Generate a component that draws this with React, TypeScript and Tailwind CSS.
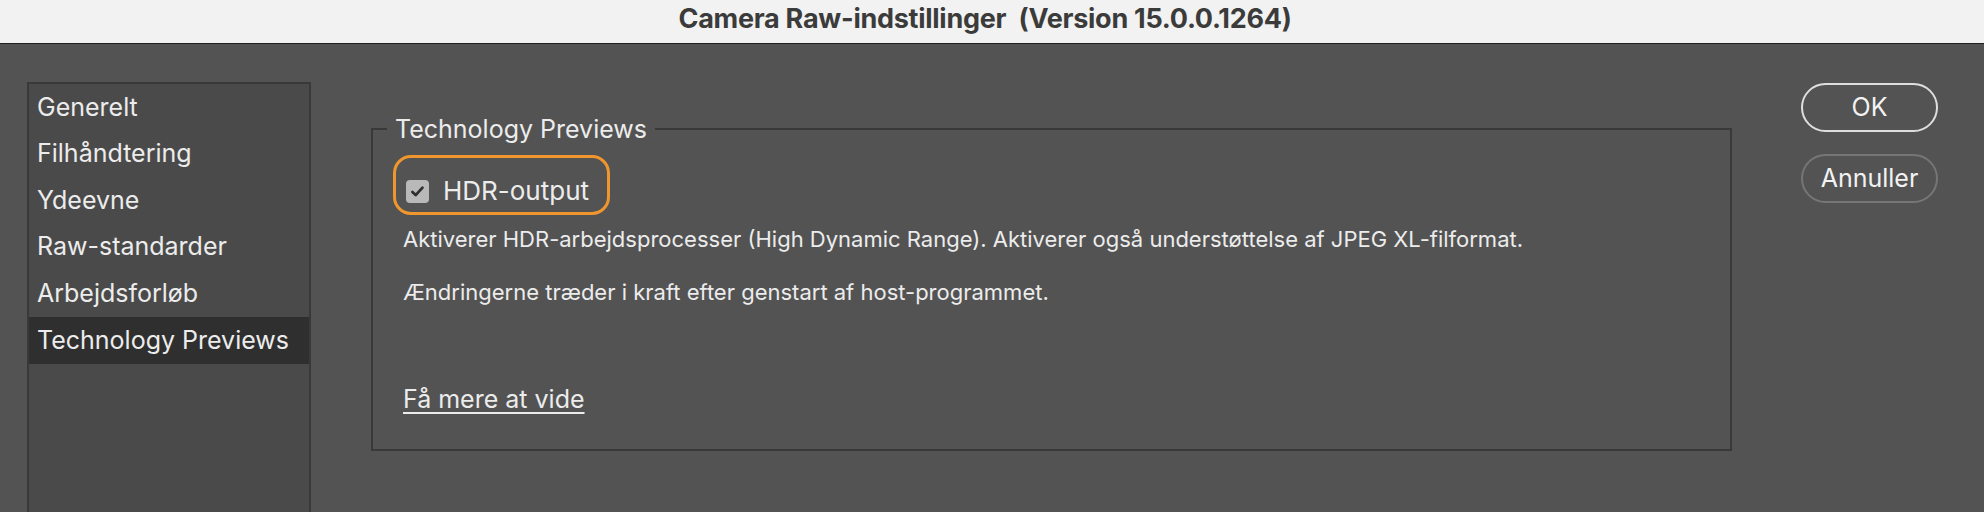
import React from "react";

const sections = [
  "Generelt",
  "Filhåndtering",
  "Ydeevne",
  "Raw-standarder",
  "Arbejdsforløb",
  "Technology Previews",
];

export default function App() {
  const active = "Technology Previews";

  return (
    <div
      className="w-[1984px] h-[512px] flex flex-col overflow-hidden"
      style={{ fontFamily: "Inter, 'Noto Sans', sans-serif" }}
    >
      {/* title bar */}
      <div className="h-[44px] shrink-0 bg-[#f1f2f1] border-b border-[#1e1e1e] flex items-center justify-center pb-[5px] pr-[14px]">
        <span className="text-[27px] leading-[30px] font-bold text-[#3b3b3b] whitespace-pre tracking-[-0.01em]">
          Camera Raw-indstillinger  (Version 15.0.0.1264)
        </span>
      </div>

      <div className="flex-1 flex bg-[#535353] pl-[27px] pt-[38px] min-h-0">
        {/* section list */}
        <div className="w-[284px] shrink-0 self-stretch bg-[#4a4a4a] border-2 border-b-0 border-[#393939]">
          {sections.map((s) => (
            <div
              key={s}
              className={
                "h-[46.6px] flex items-center pl-[8px] text-[25px] text-[#ececec] " +
                (s === active ? "bg-[#2f2f2f]" : "")
              }
            >
              {s}
            </div>
          ))}
        </div>

        {/* technology previews group */}
        <fieldset className="ml-[60px] mt-[32px] w-[1361px] h-[337px] shrink-0 border-2 border-[#393939] p-0 m-0">
          <legend className="ml-[14px] px-[8px] text-[25px] leading-[30px] text-[#ececec]">
            Technology Previews
          </legend>

          <div className="pl-[20px] pt-[11px]">
            <div className="inline-flex items-center h-[60px] border-[3px] border-[#f0962e] rounded-[18px] pl-[10px] pr-[18px] pt-[12px]">
              <span className="w-[23px] h-[23px] rounded-[4px] bg-[#b9b9b9] flex items-center justify-center">
                <svg width="17" height="17" viewBox="0 0 16 16" fill="none">
                  <path
                    d="M3.2 8.4l3.1 3 6.4-7"
                    stroke="#2f2f2f"
                    strokeWidth="2.6"
                    strokeLinecap="round"
                    strokeLinejoin="round"
                  />
                </svg>
              </span>
              <span className="ml-[14px] text-[26px] leading-[30px] text-[#ececec]">HDR-output</span>
            </div>
          </div>

          <div className="pl-[30px] mt-[9px] text-[22px] leading-[30px] text-[#ececec]">
            <p>
              Aktiverer HDR-arbejdsprocesser (High Dynamic Range). Aktiverer også understøttelse af JPEG XL-filformat.
            </p>
            <p className="mt-[23px]">Ændringerne træder i kraft efter genstart af host-programmet.</p>
            <p className="mt-[77px] text-[25px] leading-[30px]">
              <a className="underline underline-offset-[4px] decoration-2 cursor-pointer">Få mere at vide</a>
            </p>
          </div>
        </fieldset>

        {/* dialog buttons */}
        <div className="flex-1 flex flex-col items-end pr-[46px] pt-[1px] gap-[22px]">
          <button className="w-[137px] h-[49px] rounded-full border-2 border-[#dedede] text-[25px] text-[#f2f2f2]">
            OK
          </button>
          <button className="w-[137px] h-[49px] rounded-full border-2 border-[#767676] text-[25px] text-[#f2f2f2]">
            Annuller
          </button>
        </div>
      </div>
    </div>
  );
}
